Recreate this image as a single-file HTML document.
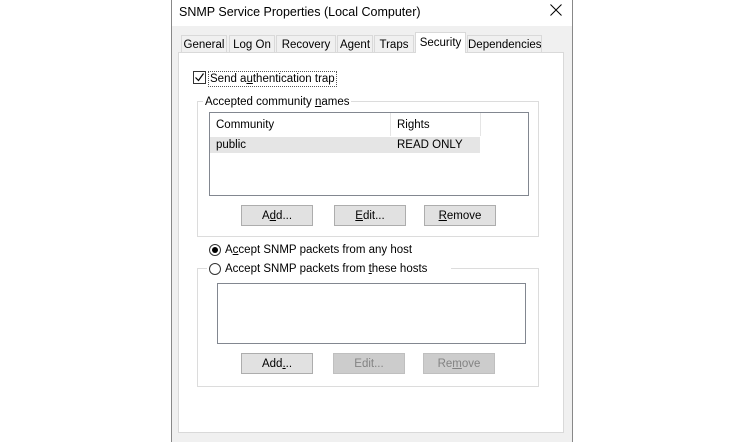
<!DOCTYPE html>
<html><head><style>
body{margin:0;width:750px;height:440px;background:#fff;position:relative;overflow:hidden;font-family:"Liberation Sans",sans-serif;font-size:11.5px;color:#000}
.a{position:absolute}
.win{left:171px;top:-2px;width:400px;height:444px;background:#f0f0f0;border-left:1px solid #888;border-right:1px solid #888}
.title{left:172px;top:0;width:400px;height:26px;background:#fff}
.tab{position:absolute;top:35px;height:17px;border:1px solid #d9d9d9;border-bottom:none;background:#f0f0f0;text-align:center;line-height:18px;box-sizing:border-box}
.panel{left:178px;top:52px;width:386px;height:381px;background:#fff;border:1px solid #d9d9d9;box-sizing:border-box}
.grp{border:1px solid #dcdcdc;box-sizing:border-box}
.lbl{background:#fff;padding:0 2px}
.btn{position:absolute;height:21px;width:72px;background:#e1e1e1;border:1px solid #adadad;box-sizing:border-box;text-align:center;line-height:20px}
.dis{background:#ccc;border-color:#bfbfbf;color:#838383}
.radio{width:12px;height:12px;border:1px solid #333;border-radius:50%;box-sizing:border-box;background:#fff}
</style></head><body>
<div class="a win"></div>
<div class="a title"></div>
<div class="a" style="left:179px;top:5px;font-size:12.5px">SNMP Service Properties (Local Computer)</div>
<svg class="a" style="left:550px;top:4px" width="12" height="12"><path d="M0.5 0.5 L11.5 11.5 M11.5 0.5 L0.5 11.5" stroke="#000" stroke-width="1"/></svg>
<div class="a panel"></div>
<div class="tab" style="left:181px;width:46px">General</div>
<div class="tab" style="left:229px;width:46px">Log On</div>
<div class="tab" style="left:276px;width:60px">Recovery</div>
<div class="tab" style="left:337px;width:36px">Agent</div>
<div class="tab" style="left:374px;width:40px">Traps</div>
<div class="tab" style="left:415px;top:32px;height:21px;width:51px;background:#fff;line-height:20px">Security</div>
<div class="tab" style="left:467px;width:75px">Dependencies</div>

<div class="a" style="left:193px;top:71px;width:13px;height:13px;border:1px solid #333;box-sizing:border-box;background:#fff">
<svg width="11" height="11" style="position:absolute;left:0;top:0"><path d="M1.5 5.5 L4.5 8.5 L9.5 1.5" stroke="#000" stroke-width="1.2" fill="none"/></svg></div>
<div class="a" style="left:208px;top:71px;border:1px dotted #555;padding:0 1px;line-height:14px">Send a<u>u</u>thentication trap</div>

<div class="a grp" style="left:197px;top:101px;width:342px;height:136px"></div>
<div class="a lbl" style="left:203px;top:96px">Accepted community <u>n</u>ames</div>
<div class="a" style="left:209px;top:112px;width:320px;height:84px;border:1px solid #828790;box-sizing:border-box;background:#fff"></div>
<div class="a" style="left:210px;top:113px;width:270px;height:23px;border-right:1px solid #e5e5e5"></div>
<div class="a" style="left:390px;top:113px;width:1px;height:23px;background:#e5e5e5"></div>
<div class="a" style="left:216px;top:119px">Community</div>
<div class="a" style="left:397px;top:119px">Rights</div>
<div class="a" style="left:210px;top:137px;width:270px;height:16px;background:#e5e5e5"></div>
<div class="a" style="left:216px;top:139px">public</div>
<div class="a" style="left:397px;top:139px">READ ONLY</div>
<div class="btn" style="left:241px;top:205px">A<u>d</u>d...</div>
<div class="btn" style="left:334px;top:205px"><u>E</u>dit...</div>
<div class="btn" style="left:424px;top:205px"><u>R</u>emove</div>

<div class="a radio" style="left:209px;top:244px"><div class="a" style="left:2px;top:2px;width:6px;height:6px;border-radius:50%;background:#000"></div></div>
<div class="a" style="left:225px;top:244px">A<u>c</u>cept SNMP packets from any host</div>

<div class="a grp" style="left:197px;top:268px;width:342px;height:119px"></div>
<div class="a lbl" style="left:207px;top:262px;width:240px;height:14px"></div>
<div class="a radio" style="left:209px;top:263px"></div>
<div class="a" style="left:225px;top:263px">Accept SNMP packets from <u>t</u>hese hosts</div>
<div class="a" style="left:217px;top:283px;width:309px;height:61px;border:1px solid #828790;box-sizing:border-box;background:#fff"></div>
<div class="btn" style="left:241px;top:353px">Add<u>.</u>..</div>
<div class="btn dis" style="left:333px;top:353px">Edit...</div>
<div class="btn dis" style="left:423px;top:353px">Re<u>m</u>ove</div>
</body></html>
